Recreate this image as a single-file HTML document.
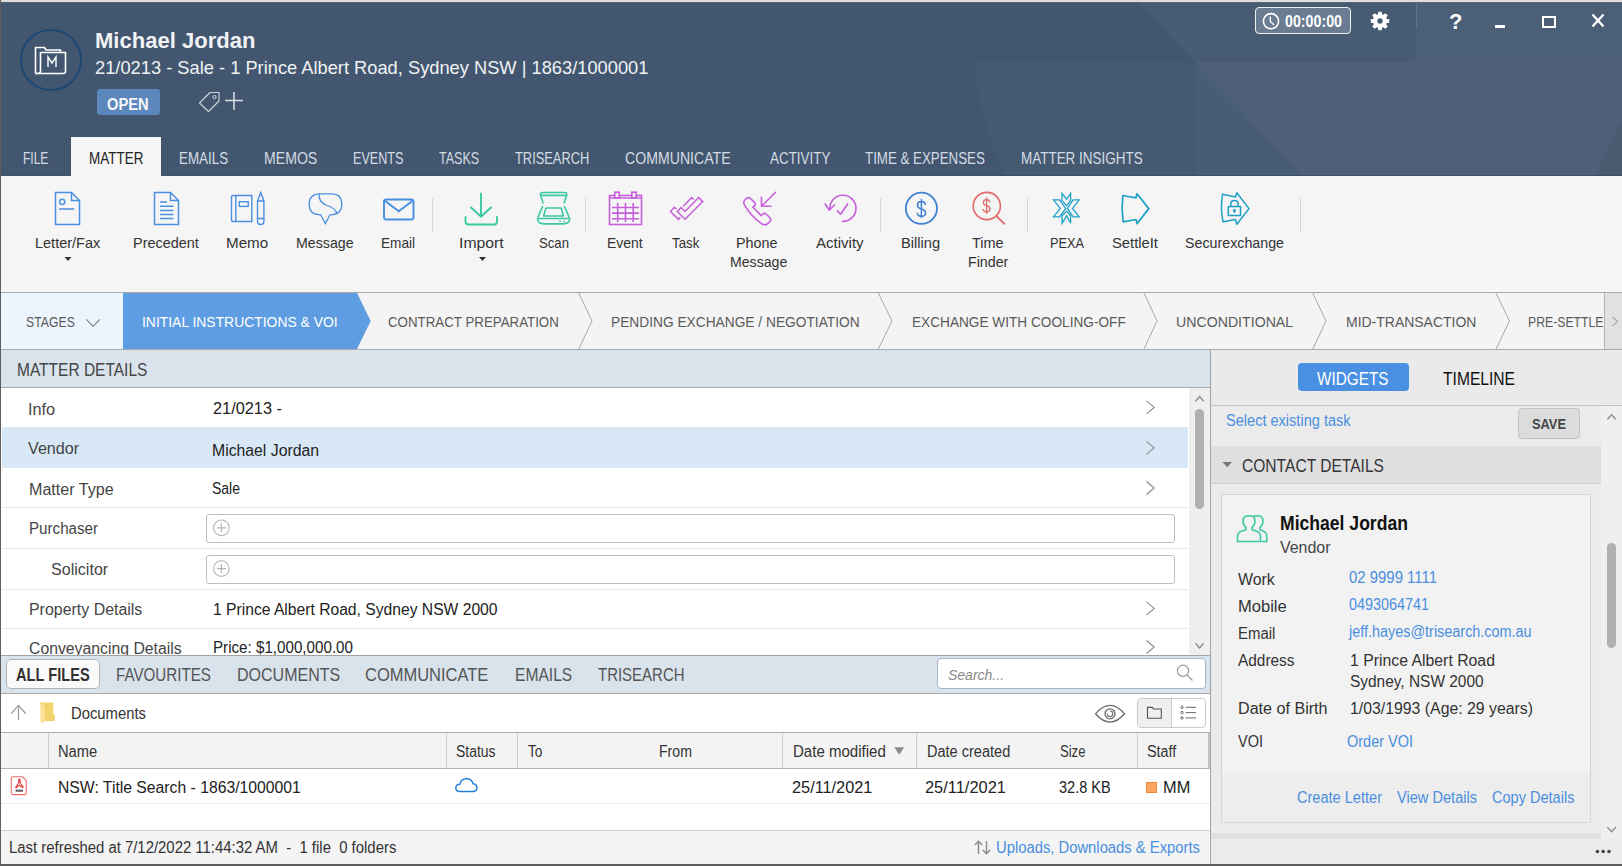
<!DOCTYPE html>
<html><head><meta charset="utf-8"><title>Matter</title>
<style>
html,body{margin:0;padding:0;}
body{width:1622px;height:866px;position:relative;overflow:hidden;background:#f5f5f5;font-family:"Liberation Sans",sans-serif;}
.a{position:absolute;display:block;}
.t{position:absolute;white-space:nowrap;font-family:"Liberation Sans",sans-serif;}
</style></head><body>
<div class="a" style="left:0px;top:0px;width:1622px;height:2px;background:#dedede;"></div>
<div class="a" style="left:0px;top:2px;width:1622px;height:1px;background:#58626e;"></div>
<div class="a" style="left:0px;top:0px;width:1px;height:866px;background:#5e5e5e;"></div>
<div class="a" style="left:1px;top:3px;width:1621px;height:173px;background:#42576f;"></div>
<svg class="a" style="left:0px;top:0px;" width="1622" height="176" viewBox="0 0 1622 176"><path d="M976,62 C976,100 990,140 1004,176 L1195,176 L1195,62 Z" fill="#fff" fill-opacity="0.02"/><path d="M1136,2 L1195,62 L1415,62 L1415,2 Z" fill="#fff" fill-opacity="0.03"/><path d="M1415,2 L1622,2 L1622,62 L1415,62 Z" fill="#fff" fill-opacity="0.05"/><path d="M1195,62 L1303,176 L1195,176 Z" fill="#fff" fill-opacity="0.035"/><path d="M1195,62 L1622,62 L1622,176 L1303,176 Z" fill="#fff" fill-opacity="0.06"/><path d="M1622,122 Q1606,148 1596,176 L1622,176 Z" fill="#000" fill-opacity="0.05"/></svg>
<div class="a" style="left:1px;top:175px;width:1621px;height:1px;background:#3c5068;"></div>
<svg class="a" style="left:19px;top:29px;" width="64" height="64" viewBox="0 0 64 64"><circle cx="32" cy="31" r="30" fill="none" stroke="#1b4775" stroke-width="2"/><path d="M16.5,44.5 V18.5 H25.5 L27,21 H41.5 V23.5" fill="none" stroke="#fff" stroke-width="1.6" stroke-linejoin="round"/><path d="M16.5,44.5 C16.5,44.5 19,45 21.5,43 V23.5 H46.5 V42 C46.5,43.5 45.5,44.5 44,44.5 H16.5" fill="none" stroke="#fff" stroke-width="1.6" stroke-linejoin="round"/><path d="M29,38 V28 L33,34 L37,28 V38" fill="none" stroke="#fff" stroke-width="1.4" stroke-linejoin="miter"/></svg>
<div class="t" style="left:95.00px;top:29.95px;font-size:22.50px;line-height:22.50px;color:#f1f2f4;font-weight:700;transform:scaleX(0.9799);transform-origin:0 0;">Michael Jordan</div>
<div class="t" style="left:94.70px;top:58.74px;font-size:18.50px;line-height:18.50px;color:#f0f2f4;transform:scaleX(0.9880);transform-origin:0 0;">21/0213 - Sale - 1 Prince Albert Road, Sydney NSW | 1863/1000001</div>
<div class="a" style="left:97px;top:89px;width:63px;height:26px;background:#5b87bd;border-radius:3px;"></div>
<div class="t" style="left:107.20px;top:96.75px;font-size:16.00px;line-height:16.00px;color:#f4f6f8;font-weight:700;transform:scaleX(0.9183);transform-origin:0 0;">OPEN</div>
<svg class="a" style="left:196px;top:89px;" width="50" height="26" viewBox="0 0 50 26"><path d="M3.5,14 L14,3.5 L23,3.5 L23,12 L12.5,22.5 Z" fill="none" stroke="#cfd6de" stroke-width="1.1" stroke-linejoin="round"/><circle cx="18.5" cy="8" r="1.6" fill="none" stroke="#cfd6de" stroke-width="1"/><path d="M38,3 V21 M29,11.5 H47" stroke="#d6dce3" stroke-width="1.6"/></svg>
<div class="a" style="left:1255px;top:7px;width:96px;height:27px;background:#6a7c92;border:1px solid #eef1f4;border-radius:4px;box-sizing:border-box;"></div>
<svg class="a" style="left:1261px;top:12px;" width="20" height="19" viewBox="0 0 20 19"><circle cx="10" cy="9.2" r="7.6" fill="none" stroke="#fff" stroke-width="1.6"/><path d="M9.3,4.5 V9.5 L13,13" fill="none" stroke="#fff" stroke-width="1.3"/></svg>
<div class="t" style="left:1285.00px;top:13.03px;font-size:16.50px;line-height:16.50px;color:#ffffff;font-weight:700;transform:scaleX(0.8623);transform-origin:0 0;">00:00:00</div>
<svg class="a" style="left:1370px;top:11px;" width="20" height="20" viewBox="0 0 20 20"><polygon points="19.26,8.37 19.26,11.63 16.69,12.05 16.18,13.29 17.70,15.39 15.39,17.70 13.29,16.18 12.05,16.69 11.63,19.26 8.37,19.26 7.95,16.69 6.71,16.18 4.61,17.70 2.30,15.39 3.82,13.29 3.31,12.05 0.74,11.63 0.74,8.37 3.31,7.95 3.82,6.71 2.30,4.61 4.61,2.30 6.71,3.82 7.95,3.31 8.37,0.74 11.63,0.74 12.05,3.31 13.29,3.82 15.39,2.30 17.70,4.61 16.18,6.71 16.69,7.95" fill="#fff"/><circle cx="10" cy="10" r="2.7" fill="#485c74"/></svg>
<div class="a" style="left:1416px;top:3px;width:1px;height:26px;background:#60728a;"></div>
<div class="t" style="left:1449.00px;top:10.87px;font-size:22.00px;line-height:22.00px;color:#ffffff;font-weight:700;">?</div>
<div class="a" style="left:1495px;top:25px;width:10px;height:3px;background:#ffffff;"></div>
<div class="a" style="left:1542px;top:16px;width:14px;height:12px;border:2px solid #fff;box-sizing:border-box;"></div>
<svg class="a" style="left:1590px;top:12px;" width="16" height="17" viewBox="0 0 16 17"><path d="M2.5,2.5 L13.5,14.5 M13.5,2.5 L2.5,14.5" stroke="#fff" stroke-width="2.4" stroke-linecap="butt"/></svg>
<div class="a" style="left:71px;top:137px;width:90px;height:39px;background:#f5f5f5;"></div>
<div class="t" style="left:23.30px;top:149.98px;font-size:16.20px;line-height:16.20px;color:#d5dce4;transform:scaleX(0.7427);transform-origin:0 0;">FILE</div>
<div class="t" style="left:89.30px;top:149.98px;font-size:16.20px;line-height:16.20px;color:#222222;transform:scaleX(0.8318);transform-origin:0 0;">MATTER</div>
<div class="t" style="left:179.20px;top:149.98px;font-size:16.20px;line-height:16.20px;color:#d5dce4;transform:scaleX(0.8283);transform-origin:0 0;">EMAILS</div>
<div class="t" style="left:264.10px;top:149.98px;font-size:16.20px;line-height:16.20px;color:#d5dce4;transform:scaleX(0.8709);transform-origin:0 0;">MEMOS</div>
<div class="t" style="left:353.40px;top:149.98px;font-size:16.20px;line-height:16.20px;color:#d5dce4;transform:scaleX(0.7793);transform-origin:0 0;">EVENTS</div>
<div class="t" style="left:439.40px;top:149.98px;font-size:16.20px;line-height:16.20px;color:#d5dce4;transform:scaleX(0.7746);transform-origin:0 0;">TASKS</div>
<div class="t" style="left:515.30px;top:149.98px;font-size:16.20px;line-height:16.20px;color:#d5dce4;transform:scaleX(0.7938);transform-origin:0 0;">TRISEARCH</div>
<div class="t" style="left:625.00px;top:149.98px;font-size:16.20px;line-height:16.20px;color:#d5dce4;transform:scaleX(0.8721);transform-origin:0 0;">COMMUNICATE</div>
<div class="t" style="left:770.00px;top:149.98px;font-size:16.20px;line-height:16.20px;color:#d5dce4;transform:scaleX(0.8285);transform-origin:0 0;">ACTIVITY</div>
<div class="t" style="left:865.10px;top:149.98px;font-size:16.20px;line-height:16.20px;color:#d5dce4;transform:scaleX(0.8224);transform-origin:0 0;">TIME &amp; EXPENSES</div>
<div class="t" style="left:1020.50px;top:149.98px;font-size:16.20px;line-height:16.20px;color:#d5dce4;transform:scaleX(0.8313);transform-origin:0 0;">MATTER INSIGHTS</div>
<div class="a" style="left:1px;top:176px;width:1621px;height:116px;background:#f5f5f5;"></div>
<div class="a" style="left:1px;top:292px;width:1621px;height:1px;background:#aaaaaa;"></div>
<div class="t" style="left:34.90px;top:235.87px;font-size:14.80px;line-height:14.80px;color:#333333;transform:scaleX(0.9790);transform-origin:0 0;">Letter/Fax</div>
<div class="t" style="left:133.20px;top:235.87px;font-size:14.80px;line-height:14.80px;color:#333333;transform:scaleX(0.9763);transform-origin:0 0;">Precedent</div>
<div class="t" style="left:226.40px;top:235.87px;font-size:14.80px;line-height:14.80px;color:#333333;transform:scaleX(1.0268);transform-origin:0 0;">Memo</div>
<div class="t" style="left:296.30px;top:235.87px;font-size:14.80px;line-height:14.80px;color:#333333;transform:scaleX(0.9601);transform-origin:0 0;">Message</div>
<div class="t" style="left:381.40px;top:235.87px;font-size:14.80px;line-height:14.80px;color:#333333;transform:scaleX(0.9189);transform-origin:0 0;">Email</div>
<div class="t" style="left:459.00px;top:235.87px;font-size:14.80px;line-height:14.80px;color:#333333;transform:scaleX(1.0668);transform-origin:0 0;">Import</div>
<div class="t" style="left:538.50px;top:235.87px;font-size:14.80px;line-height:14.80px;color:#333333;transform:scaleX(0.8902);transform-origin:0 0;">Scan</div>
<div class="t" style="left:607.30px;top:235.87px;font-size:14.80px;line-height:14.80px;color:#333333;transform:scaleX(0.9392);transform-origin:0 0;">Event</div>
<div class="t" style="left:672.40px;top:235.87px;font-size:14.80px;line-height:14.80px;color:#333333;transform:scaleX(0.8984);transform-origin:0 0;">Task</div>
<div class="t" style="left:736.30px;top:235.87px;font-size:14.80px;line-height:14.80px;color:#333333;transform:scaleX(0.9673);transform-origin:0 0;">Phone</div>
<div class="t" style="left:816.20px;top:235.87px;font-size:14.80px;line-height:14.80px;color:#333333;transform:scaleX(1.0149);transform-origin:0 0;">Activity</div>
<div class="t" style="left:901.30px;top:235.87px;font-size:14.80px;line-height:14.80px;color:#333333;transform:scaleX(0.9924);transform-origin:0 0;">Billing</div>
<div class="t" style="left:971.80px;top:235.87px;font-size:14.80px;line-height:14.80px;color:#333333;transform:scaleX(0.9752);transform-origin:0 0;">Time</div>
<div class="t" style="left:1049.50px;top:235.87px;font-size:14.80px;line-height:14.80px;color:#333333;transform:scaleX(0.8608);transform-origin:0 0;">PEXA</div>
<div class="t" style="left:1111.60px;top:235.87px;font-size:14.80px;line-height:14.80px;color:#333333;transform:scaleX(0.9978);transform-origin:0 0;">SettleIt</div>
<div class="t" style="left:1184.90px;top:235.87px;font-size:14.80px;line-height:14.80px;color:#333333;transform:scaleX(0.9631);transform-origin:0 0;">Securexchange</div>
<div class="t" style="left:729.60px;top:254.67px;font-size:14.80px;line-height:14.80px;color:#333333;transform:scaleX(0.9534);transform-origin:0 0;">Message</div>
<div class="t" style="left:968.40px;top:254.67px;font-size:14.80px;line-height:14.80px;color:#333333;transform:scaleX(0.9619);transform-origin:0 0;">Finder</div>
<div class="a" style="left:432px;top:198px;width:1px;height:35px;background:#d9d9d9;"></div>
<div class="a" style="left:585px;top:198px;width:1px;height:35px;background:#d9d9d9;"></div>
<div class="a" style="left:880px;top:198px;width:1px;height:35px;background:#d9d9d9;"></div>
<div class="a" style="left:1027px;top:198px;width:1px;height:35px;background:#d9d9d9;"></div>
<div class="a" style="left:1300px;top:198px;width:1px;height:35px;background:#d9d9d9;"></div>
<svg class="a" style="left:0;top:0" width="1622" height="300" viewBox="0 0 1622 300"><path d="M64.5,257 H71.5 L68,261 Z" fill="#333"/><path d="M479,257 H486 L482.5,261 Z" fill="#333"/><g fill="none" stroke="#4a8fe0" stroke-width="1.5" stroke-linejoin="miter"><path d="M55.5,192.5 H71.5 L79.5,200.5 V224.5 H55.5 Z"/><path d="M71.5,192.5 V200.5 H79.5"/><circle cx="62.2" cy="201.8" r="2.6"/><path d="M59.2,209 H74.3"/></g><g fill="none" stroke="#4a8fe0" stroke-width="1.5"><path d="M154.5,192.5 H170.5 L178.5,200.5 V224.5 H154.5 Z"/><path d="M170.5,192.5 V200.5 H178.5"/><path d="M160,202 H167 M160,206.3 H173.5 M160,210.4 H173.5 M160,214.5 H173.5 M160,218.6 H173.5"/></g><g fill="none" stroke="#4a8fe0" stroke-width="1.4"><path d="M233,195.5 H251.8 V221.5 H233 Q231.5,221.5 231.5,220 V197 Q231.5,195.5 233,195.5 Z"/><path d="M235.8,195.5 V221.5"/><rect x="239.3" y="201.8" width="9" height="4.6"/><path d="M257.5,201 L260.7,192.5 L263.9,201 V221 Q263.9,224.5 260.7,224.5 Q257.5,224.5 257.5,221 Z"/><path d="M257.5,201 H263.9 M257.5,218.5 H263.9"/></g><g fill="none" stroke="#4a8fe0" stroke-width="1.3"><path d="M320.6,214.8 Q309.2,214.8 309.2,204.2 Q309.2,193.8 320,193.8 H331.5 Q341.8,193.8 341.8,204.2 Q341.8,214.8 330,214.8 L325.4,223.6 Z"/><path d="M319.2,194 Q318.2,201.5 326,205 Q335.5,208 337.3,214"/></g><g fill="none" stroke="#4a8fe0" stroke-width="1.9"><rect x="384" y="199.5" width="29.5" height="20" rx="2.2"/><path d="M384.5,200.5 L398.7,211.2 L413,200.5"/></g><g fill="none" stroke="#3cc8a2" stroke-width="1.9" stroke-linecap="round"><path d="M481,193.5 V216.5 M471,207.5 L481,216.8 L491,207.5"/><path d="M465.5,217 V221.5 Q465.5,224.5 468.5,224.5 H494 Q497,224.5 497,221.5 V217"/></g><g fill="none" stroke="#3cc8a2" stroke-width="1.6" stroke-linejoin="round"><path d="M540.5,195.4 V194.6 Q540.5,192.5 543,192.5 H564.5 Q566.8,192.5 566.8,194.6 V195.4 Z"/><path d="M540.9,195.6 L543.2,203.6 M542.8,206 L537.8,217.6 M566.4,195.6 L564,203.6 M564.3,206 L569.3,217.6"/><path d="M537.6,218.5 H569.7 Q569.7,223.9 563,223.9 H544.2 Q537.6,223.9 537.6,218.5 Z"/><path d="M546,208 H561 L563.5,216 H543.6 Z"/></g><circle cx="560" cy="221.3" r="0.9" fill="#3cc8a2"/><circle cx="564" cy="221.3" r="0.9" fill="#3cc8a2"/><g fill="none" stroke="#c75edb" stroke-width="1.6"><rect x="609.5" y="195.5" width="32" height="29"/><rect x="614.8" y="192.2" width="4.4" height="5.6" fill="#f5f5f5"/><rect x="631.8" y="192.2" width="4.4" height="5.6" fill="#f5f5f5"/><path d="M609.5,198 H641.5" /><path d="M612,207.5 H639 M612,213.1 H639 M612,218.7 H639 M617.7,203 V222 M625.5,203 V222 M633.2,203 V222"/></g><g fill="none" stroke="#c75edb" stroke-width="1.5" stroke-linejoin="miter"><path d="M677.3,211.5 L681.2,207.5 L685,211.4 L698.6,197.5 L702.7,201.6 L685,219.2 Z"/><polyline points="676.6,209.3 674.4,207.3 670.5,211.5 678.4,219.4 680.4,217.4"/><polyline points="683.2,206.4 691.5,197.5 693.7,199.4"/></g><g fill="none" stroke="#c75edb" stroke-width="1.6" stroke-linejoin="round" stroke-linecap="round"><path d="M745.6,199.4 L746.4,198.7 Q748.6,196.6 750.8,198.8 L754.6,202.6 Q756.2,204.5 754.5,206 L752.8,207 L761.2,215.6 L762.6,214.2 Q764.5,212.6 766.4,214.3 L769.9,217.8 Q771.6,219.8 769.8,221.6 L767.2,224 Q764.6,225.6 761.6,223.7 Q751.2,216.6 744.3,204.6 Q742.8,201.3 745.6,199.4 Z"/><path d="M775.6,192.3 L761.5,206.3 M761.5,197.3 V206.3 H771"/></g><g fill="none" stroke="#c75edb" stroke-width="1.6" stroke-linecap="round" stroke-linejoin="round"><path d="M829.8,209 A13.1,13.1 0 1 1 842.6,221.4"/><path d="M825.1,204 L829.4,210.2 L834.5,204.8"/><path d="M837.3,210.9 L840.6,214.2 L847.7,203.8"/></g><circle cx="921.4" cy="208.3" r="15.6" fill="none" stroke="#3f7fd3" stroke-width="1.8"/><path d="M921.4,199 V218 M925.4,205 Q925.2,201.6 921.4,201.6 Q917.5,201.6 917.5,205 Q917.5,208.1 921.4,209 Q925.6,209.9 925.6,213 Q925.6,216.3 921.4,216.3 Q917.3,216.3 917.2,212.8" fill="none" stroke="#3f7fd3" stroke-width="1.5"/><circle cx="986.8" cy="206" r="13.6" fill="none" stroke="#df6a6a" stroke-width="1.6"/><path d="M996.3,216 L1004.5,223.8" stroke="#df6a6a" stroke-width="1.8" stroke-linecap="round"/><path d="M986.6,197.3 V213.8 M989.8,202.5 Q989.6,199.7 986.6,199.7 Q983.4,199.7 983.4,202.5 Q983.4,205.1 986.6,205.7 Q990,206.4 990,209 Q990,211.8 986.6,211.8 Q983.3,211.8 983.2,209" fill="none" stroke="#df6a6a" stroke-width="1.3"/><g fill="none" stroke="#1ea1c6" stroke-width="1.3" stroke-linejoin="miter"><path d="M1062,193.5 L1066.7,199.2 L1070.6,193.5 V200.6 L1066.7,205.7 L1062,200.6 Z"/><path d="M1062,223.3 L1066.7,215.8 L1070.6,223.3 V215.8 L1066.7,211.1 L1062,215.8 Z"/><path d="M1053.5,199.9 H1059.6 L1065.7,208.4 L1059.6,216.8 H1053.5 L1060.3,208.4 Z"/><path d="M1079.2,199.9 H1073.1 L1067.4,208.4 L1073.1,216.8 H1079.2 L1072.5,208.4 Z"/></g><path d="M1122.8,195.5 L1136,197.8 L1137,193.8 L1148.8,208.6 L1137,223.6 L1136,219.5 L1123.2,221.8 Q1121.2,208.6 1122.8,195.5 Z" fill="none" stroke="#1ea1c6" stroke-width="1.7" stroke-linejoin="round"/><g fill="none" stroke="#1ea1c6" stroke-width="1.5" stroke-linejoin="round"><path d="M1222.5,194.3 L1235.5,197 L1236.8,192.8 L1249,208.6 L1236.8,224.2 L1235.5,219.6 L1223,221.8 Q1220.2,208 1222.5,194.3 Z"/><rect x="1228.3" y="206.5" width="12.2" height="9"/><path d="M1230.8,206.5 V203.8 Q1230.8,200.5 1234.4,200.5 Q1238,200.5 1238,203.8 V206.5"/></g><circle cx="1234.4" cy="210.4" r="1.5" fill="#1ea1c6"/><path d="M1234.4,210.5 V213" stroke="#1ea1c6" stroke-width="1.2"/></svg>
<div class="a" style="left:1px;top:293px;width:1621px;height:56px;background:#f4f4f4;"></div>
<div class="a" style="left:1px;top:349px;width:1621px;height:1px;background:#a9a9a9;"></div>
<div class="a" style="left:1px;top:293px;width:122px;height:56px;background:#ecf5fe;"></div>
<svg class="a" style="left:0;top:0" width="1622" height="360" viewBox="0 0 1622 360"><polygon points="123,293 357,293 370.7,321 357,349 123,349" fill="#5f9de3"/><polyline points="578.7,293 592,321 578.7,349" fill="none" stroke="#a8a8a8" stroke-width="1"/><polyline points="878.3,293 892,321 878.3,349" fill="none" stroke="#a8a8a8" stroke-width="1"/><polyline points="1144,293 1157,321 1144,349" fill="none" stroke="#a8a8a8" stroke-width="1"/><polyline points="1312.8,293 1326,321 1312.8,349" fill="none" stroke="#a8a8a8" stroke-width="1"/><polyline points="1496,293 1509.5,321 1496,349" fill="none" stroke="#a8a8a8" stroke-width="1"/><polyline points="86.3,319.3 93.1,326.3 99.9,319.3" fill="none" stroke="#777" stroke-width="1.1"/></svg>
<div class="t" style="left:26.40px;top:313.80px;font-size:15.00px;line-height:15.00px;color:#5a5a5a;transform:scaleX(0.8174);transform-origin:0 0;">STAGES</div>
<div class="t" style="left:141.80px;top:313.80px;font-size:15.00px;line-height:15.00px;color:#ffffff;transform:scaleX(0.9266);transform-origin:0 0;">INITIAL INSTRUCTIONS &amp; VOI</div>
<div class="t" style="left:388.30px;top:313.80px;font-size:15.00px;line-height:15.00px;color:#5a5a5a;transform:scaleX(0.8873);transform-origin:0 0;">CONTRACT PREPARATION</div>
<div class="t" style="left:610.70px;top:313.80px;font-size:15.00px;line-height:15.00px;color:#5a5a5a;transform:scaleX(0.9160);transform-origin:0 0;">PENDING EXCHANGE / NEGOTIATION</div>
<div class="t" style="left:911.60px;top:313.80px;font-size:15.00px;line-height:15.00px;color:#5a5a5a;transform:scaleX(0.9094);transform-origin:0 0;">EXCHANGE WITH COOLING-OFF</div>
<div class="t" style="left:1175.60px;top:313.80px;font-size:15.00px;line-height:15.00px;color:#5a5a5a;transform:scaleX(0.9436);transform-origin:0 0;">UNCONDITIONAL</div>
<div class="t" style="left:1346.00px;top:313.80px;font-size:15.00px;line-height:15.00px;color:#5a5a5a;transform:scaleX(0.9314);transform-origin:0 0;">MID-TRANSACTION</div>
<div class="t" style="left:1528.20px;top:313.80px;font-size:15.00px;line-height:15.00px;color:#5a5a5a;transform:scaleX(0.8162);transform-origin:0 0;">PRE-SETTLE</div>
<div class="a" style="left:1604px;top:293px;width:18px;height:56px;background:#e1e1e1;border-left:1px solid #b3b3b3;box-sizing:border-box;"></div>
<svg class="a" style="left:1604px;top:293px;" width="18" height="56" viewBox="0 0 18 56"><polyline points="8.5,24 13.5,28.5 8.5,33" fill="none" stroke="#aaa" stroke-width="1.2"/></svg>
<div class="a" style="left:1px;top:350px;width:1209px;height:37px;background:#d9e3ec;"></div>
<div class="a" style="left:1px;top:387px;width:1209px;height:1px;background:#a9a9a9;"></div>
<div class="t" style="left:16.60px;top:360.59px;font-size:18.20px;line-height:18.20px;color:#454545;transform:scaleX(0.8523);transform-origin:0 0;">MATTER DETAILS</div>
<div class="a" style="left:1px;top:388px;width:1188px;height:267px;background:#ffffff;"></div>
<div class="a" style="left:2px;top:427px;width:1186px;height:41px;background:#d8e8f6;"></div>
<div class="a" style="left:2px;top:507px;width:1186px;height:1px;background:#e8e8e8;"></div>
<div class="a" style="left:2px;top:548px;width:1186px;height:1px;background:#e8e8e8;"></div>
<div class="a" style="left:2px;top:589px;width:1186px;height:1px;background:#e8e8e8;"></div>
<div class="a" style="left:2px;top:628px;width:1186px;height:1px;background:#e8e8e8;"></div>
<div class="t" style="left:28.30px;top:401.85px;font-size:16.00px;line-height:16.00px;color:#454545;transform:scaleX(1.0187);transform-origin:0 0;">Info</div>
<div class="t" style="left:28.30px;top:440.65px;font-size:16.00px;line-height:16.00px;color:#454545;transform:scaleX(1.0099);transform-origin:0 0;">Vendor</div>
<div class="t" style="left:28.60px;top:481.95px;font-size:16.00px;line-height:16.00px;color:#454545;transform:scaleX(1.0059);transform-origin:0 0;">Matter Type</div>
<div class="t" style="left:28.60px;top:520.65px;font-size:16.00px;line-height:16.00px;color:#454545;transform:scaleX(0.9465);transform-origin:0 0;">Purchaser</div>
<div class="t" style="left:50.50px;top:561.65px;font-size:16.00px;line-height:16.00px;color:#454545;transform:scaleX(1.0053);transform-origin:0 0;">Solicitor</div>
<div class="t" style="left:28.60px;top:602.45px;font-size:16.00px;line-height:16.00px;color:#454545;transform:scaleX(0.9956);transform-origin:0 0;">Property Details</div>
<div class="t" style="left:28.60px;top:641.15px;font-size:16.00px;line-height:16.00px;color:#454545;transform:scaleX(0.9864);transform-origin:0 0;">Conveyancing Details</div>
<div class="t" style="left:212.50px;top:400.95px;font-size:16.00px;line-height:16.00px;color:#222222;transform:scaleX(1.0192);transform-origin:0 0;">21/0213 -</div>
<div class="t" style="left:212.30px;top:442.95px;font-size:16.00px;line-height:16.00px;color:#222222;transform:scaleX(0.9862);transform-origin:0 0;">Michael Jordan</div>
<div class="t" style="left:212.40px;top:481.25px;font-size:16.00px;line-height:16.00px;color:#222222;transform:scaleX(0.8750);transform-origin:0 0;">Sale</div>
<div class="t" style="left:212.80px;top:601.75px;font-size:16.00px;line-height:16.00px;color:#222222;transform:scaleX(0.9783);transform-origin:0 0;">1 Prince Albert Road, Sydney NSW 2000</div>
<div class="t" style="left:212.50px;top:640.45px;font-size:16.00px;line-height:16.00px;color:#222222;transform:scaleX(0.9479);transform-origin:0 0;">Price: $1,000,000.00</div>
<div class="a" style="left:206px;top:513.5px;width:969px;height:29.5px;background:#ffffff;border:1px solid #bdbdbd;border-radius:3px;box-sizing:border-box;"></div>
<div class="a" style="left:206px;top:554.5px;width:969px;height:29.5px;background:#ffffff;border:1px solid #bdbdbd;border-radius:3px;box-sizing:border-box;"></div>
<div class="a" style="left:1189px;top:388px;width:21px;height:267px;background:#efefef;"></div>
<div class="a" style="left:1195px;top:409px;width:9px;height:100px;background:#b0b0b0;border-radius:4.5px;"></div>
<div class="a" style="left:1px;top:655px;width:1209px;height:1px;background:#a3a3a3;"></div>
<div class="a" style="left:1px;top:656px;width:1209px;height:37px;background:#d9e3ec;"></div>
<div class="a" style="left:1px;top:693px;width:1209px;height:1px;background:#a9a9a9;"></div>
<div class="a" style="left:5.5px;top:658.5px;width:94.5px;height:30px;background:#fafafa;border:1px solid #b3b3b3;border-radius:5px;box-sizing:border-box;"></div>
<div class="t" style="left:15.50px;top:666.58px;font-size:17.50px;line-height:17.50px;color:#333333;font-weight:700;transform:scaleX(0.8354);transform-origin:0 0;">ALL FILES</div>
<div class="t" style="left:115.50px;top:666.16px;font-size:18.00px;line-height:18.00px;color:#555555;transform:scaleX(0.8421);transform-origin:0 0;">FAVOURITES</div>
<div class="t" style="left:236.70px;top:666.16px;font-size:18.00px;line-height:18.00px;color:#555555;transform:scaleX(0.8897);transform-origin:0 0;">DOCUMENTS</div>
<div class="t" style="left:365.20px;top:666.16px;font-size:18.00px;line-height:18.00px;color:#555555;transform:scaleX(0.9161);transform-origin:0 0;">COMMUNICATE</div>
<div class="t" style="left:514.50px;top:666.16px;font-size:18.00px;line-height:18.00px;color:#555555;transform:scaleX(0.8667);transform-origin:0 0;">EMAILS</div>
<div class="t" style="left:597.60px;top:666.16px;font-size:18.00px;line-height:18.00px;color:#555555;transform:scaleX(0.8317);transform-origin:0 0;">TRISEARCH</div>
<div class="a" style="left:937px;top:658px;width:268.5px;height:31px;background:#ffffff;border:1px solid #a6b6c8;border-radius:4px;box-sizing:border-box;"></div>
<div class="t" style="left:947.50px;top:666.88px;font-size:15.50px;line-height:15.50px;color:#8a8a8a;font-style:italic;transform:scaleX(0.9032);transform-origin:0 0;">Search...</div>
<div class="a" style="left:1px;top:694px;width:1209px;height:38px;background:#ffffff;"></div>
<div class="a" style="left:1px;top:732px;width:1209px;height:1px;background:#adadad;"></div>
<div class="t" style="left:71.20px;top:706.05px;font-size:16.00px;line-height:16.00px;color:#333333;transform:scaleX(0.9258);transform-origin:0 0;">Documents</div>
<div class="a" style="left:1137px;top:698px;width:69px;height:30px;background:#ffffff;border:1px solid #cacaca;border-radius:4px;box-sizing:border-box;"></div>
<div class="a" style="left:1138px;top:699px;width:33px;height:28px;background:#efefef;border-radius:3px 0 0 3px;"></div>
<div class="a" style="left:1171px;top:699px;width:1px;height:28.5px;background:#cacaca;"></div>
<div class="a" style="left:1px;top:733px;width:1209px;height:35px;background:#f4f4f4;"></div>
<div class="a" style="left:1px;top:768px;width:1209px;height:1px;background:#b3b3b3;"></div>
<div class="a" style="left:48px;top:733px;width:1px;height:35px;background:#cdcdcd;"></div>
<div class="a" style="left:446px;top:733px;width:1px;height:35px;background:#cdcdcd;"></div>
<div class="a" style="left:517px;top:733px;width:1px;height:35px;background:#cdcdcd;"></div>
<div class="a" style="left:782px;top:733px;width:1px;height:35px;background:#cdcdcd;"></div>
<div class="a" style="left:916px;top:733px;width:1px;height:35px;background:#cdcdcd;"></div>
<div class="a" style="left:1137px;top:733px;width:1px;height:35px;background:#cdcdcd;"></div>
<div class="a" style="left:1208px;top:733px;width:2px;height:35px;background:#c4c4c4;"></div>
<div class="t" style="left:58.30px;top:743.65px;font-size:16.00px;line-height:16.00px;color:#333333;transform:scaleX(0.9180);transform-origin:0 0;">Name</div>
<div class="t" style="left:456.20px;top:743.65px;font-size:16.00px;line-height:16.00px;color:#333333;transform:scaleX(0.8700);transform-origin:0 0;">Status</div>
<div class="t" style="left:527.50px;top:743.65px;font-size:16.00px;line-height:16.00px;color:#333333;transform:scaleX(0.8521);transform-origin:0 0;">To</div>
<div class="t" style="left:659.40px;top:743.65px;font-size:16.00px;line-height:16.00px;color:#333333;transform:scaleX(0.8820);transform-origin:0 0;">From</div>
<div class="t" style="left:792.60px;top:743.65px;font-size:16.00px;line-height:16.00px;color:#333333;transform:scaleX(0.9402);transform-origin:0 0;">Date modified</div>
<div class="t" style="left:926.50px;top:743.65px;font-size:16.00px;line-height:16.00px;color:#333333;transform:scaleX(0.9083);transform-origin:0 0;">Date created</div>
<div class="t" style="left:1059.50px;top:743.65px;font-size:16.00px;line-height:16.00px;color:#333333;transform:scaleX(0.8167);transform-origin:0 0;">Size</div>
<div class="t" style="left:1147.30px;top:743.65px;font-size:16.00px;line-height:16.00px;color:#333333;transform:scaleX(0.8960);transform-origin:0 0;">Staff</div>
<div class="a" style="left:1px;top:769px;width:1209px;height:61px;background:#ffffff;"></div>
<div class="a" style="left:1px;top:803px;width:1209px;height:1px;background:#ececec;"></div>
<div class="t" style="left:57.80px;top:779.85px;font-size:16.00px;line-height:16.00px;color:#222222;transform:scaleX(0.9830);transform-origin:0 0;">NSW: Title Search - 1863/1000001</div>
<div class="t" style="left:791.70px;top:779.85px;font-size:16.00px;line-height:16.00px;color:#222222;transform:scaleX(1.0190);transform-origin:0 0;">25/11/2021</div>
<div class="t" style="left:925.40px;top:779.85px;font-size:16.00px;line-height:16.00px;color:#222222;transform:scaleX(1.0253);transform-origin:0 0;">25/11/2021</div>
<div class="t" style="left:1058.60px;top:779.85px;font-size:16.00px;line-height:16.00px;color:#222222;transform:scaleX(0.9086);transform-origin:0 0;">32.8 KB</div>
<div class="t" style="left:1162.90px;top:779.85px;font-size:16.00px;line-height:16.00px;color:#222222;transform:scaleX(1.0225);transform-origin:0 0;">MM</div>
<div class="a" style="left:1146px;top:782px;width:11px;height:11px;background:#f8a660;border:1px solid #ee8a3a;box-sizing:border-box;"></div>
<div class="a" style="left:1px;top:830px;width:1209px;height:1px;background:#cfcfcf;"></div>
<div class="a" style="left:1px;top:831px;width:1209px;height:33px;background:#f4f4f4;"></div>
<div class="t" style="left:9.00px;top:840.05px;font-size:16.00px;line-height:16.00px;color:#333333;transform:scaleX(0.9312);transform-origin:0 0;white-space:pre;">Last refreshed at 7/12/2022 11:44:32 AM  -  1 file  0 folders</div>
<div class="t" style="left:996.30px;top:839.85px;font-size:16.00px;line-height:16.00px;color:#4a8fe0;transform:scaleX(0.9248);transform-origin:0 0;">Uploads, Downloads &amp; Exports</div>
<div class="a" style="left:1210px;top:350px;width:1px;height:514px;background:#a3a3a3;"></div>
<div class="a" style="left:1211px;top:350px;width:411px;height:514px;background:#eaeaea;"></div>
<div class="a" style="left:1298px;top:363px;width:111px;height:28px;background:#4a90e2;border-radius:4px;"></div>
<div class="t" style="left:1317.30px;top:369.64px;font-size:18.50px;line-height:18.50px;color:#ffffff;transform:scaleX(0.8285);transform-origin:0 0;">WIDGETS</div>
<div class="t" style="left:1442.80px;top:369.64px;font-size:18.50px;line-height:18.50px;color:#111111;transform:scaleX(0.8441);transform-origin:0 0;">TIMELINE</div>
<div class="a" style="left:1211px;top:405px;width:411px;height:1px;background:#c6c6c6;"></div>
<div class="a" style="left:1211px;top:406px;width:390px;height:433px;background:#ebebeb;"></div>
<div class="t" style="left:1226.10px;top:412.95px;font-size:16.00px;line-height:16.00px;color:#4a8fe0;transform:scaleX(0.9096);transform-origin:0 0;">Select existing task</div>
<div class="a" style="left:1518px;top:407.5px;width:62px;height:31px;background:#dcdcdc;border:1px solid #c3c3c3;border-radius:4px;box-sizing:border-box;"></div>
<div class="t" style="left:1531.50px;top:416.48px;font-size:15.50px;line-height:15.50px;color:#454545;font-weight:700;transform:scaleX(0.8273);transform-origin:0 0;">SAVE</div>
<div class="a" style="left:1211px;top:446px;width:390px;height:37px;background:#dfdfdf;"></div>
<div class="a" style="left:1211px;top:483px;width:390px;height:1px;background:#d0d0d0;"></div>
<div class="t" style="left:1242.30px;top:457.04px;font-size:18.50px;line-height:18.50px;color:#353535;transform:scaleX(0.8422);transform-origin:0 0;">CONTACT DETAILS</div>
<div class="a" style="left:1221px;top:494px;width:370px;height:329px;background:#f2f2f2;border:1px solid #d6d6d6;box-sizing:border-box;"></div>
<div class="a" style="left:1222px;top:772px;width:368px;height:50px;background:#ededed;"></div>
<div class="t" style="left:1279.60px;top:514.39px;font-size:19.50px;line-height:19.50px;color:#111111;font-weight:700;transform:scaleX(0.9014);transform-origin:0 0;">Michael Jordan</div>
<div class="t" style="left:1279.60px;top:540.35px;font-size:16.00px;line-height:16.00px;color:#454545;transform:scaleX(0.9961);transform-origin:0 0;">Vendor</div>
<div class="t" style="left:1237.50px;top:571.95px;font-size:16.00px;line-height:16.00px;color:#333333;transform:scaleX(0.9919);transform-origin:0 0;">Work</div>
<div class="t" style="left:1349.10px;top:569.95px;font-size:16.00px;line-height:16.00px;color:#4a8fe0;transform:scaleX(0.9332);transform-origin:0 0;">02 9999 1111</div>
<div class="t" style="left:1237.50px;top:599.15px;font-size:16.00px;line-height:16.00px;color:#333333;transform:scaleX(1.0340);transform-origin:0 0;">Mobile</div>
<div class="t" style="left:1349.10px;top:596.85px;font-size:16.00px;line-height:16.00px;color:#4a8fe0;transform:scaleX(0.8989);transform-origin:0 0;">0493064741</div>
<div class="t" style="left:1237.50px;top:626.05px;font-size:16.00px;line-height:16.00px;color:#333333;transform:scaleX(0.9325);transform-origin:0 0;">Email</div>
<div class="t" style="left:1349.36px;top:623.65px;font-size:16.00px;line-height:16.00px;color:#4a8fe0;transform:scaleX(0.9010);transform-origin:0 0;">jeff.hayes@trisearch.com.au</div>
<div class="t" style="left:1237.50px;top:653.05px;font-size:16.00px;line-height:16.00px;color:#333333;transform:scaleX(0.9625);transform-origin:0 0;">Address</div>
<div class="t" style="left:1349.60px;top:652.55px;font-size:16.00px;line-height:16.00px;color:#333333;transform:scaleX(0.9877);transform-origin:0 0;">1 Prince Albert Road</div>
<div class="t" style="left:1349.60px;top:673.75px;font-size:16.00px;line-height:16.00px;color:#333333;transform:scaleX(0.9653);transform-origin:0 0;">Sydney, NSW 2000</div>
<div class="t" style="left:1237.50px;top:701.05px;font-size:16.00px;line-height:16.00px;color:#333333;transform:scaleX(1.0067);transform-origin:0 0;">Date of Birth</div>
<div class="t" style="left:1349.60px;top:700.95px;font-size:16.00px;line-height:16.00px;color:#333333;transform:scaleX(0.9892);transform-origin:0 0;">1/03/1993 (Age: 29 years)</div>
<div class="t" style="left:1237.50px;top:734.25px;font-size:16.00px;line-height:16.00px;color:#333333;transform:scaleX(0.9058);transform-origin:0 0;">VOI</div>
<div class="t" style="left:1347.20px;top:733.75px;font-size:16.00px;line-height:16.00px;color:#4a8fe0;transform:scaleX(0.9053);transform-origin:0 0;">Order VOI</div>
<div class="t" style="left:1296.90px;top:790.25px;font-size:16.00px;line-height:16.00px;color:#4a8fe0;transform:scaleX(0.9101);transform-origin:0 0;">Create Letter</div>
<div class="t" style="left:1397.30px;top:790.25px;font-size:16.00px;line-height:16.00px;color:#4a8fe0;transform:scaleX(0.9122);transform-origin:0 0;">View Details</div>
<div class="t" style="left:1492.20px;top:790.25px;font-size:16.00px;line-height:16.00px;color:#4a8fe0;transform:scaleX(0.9085);transform-origin:0 0;">Copy Details</div>
<div class="a" style="left:1601px;top:406px;width:21px;height:433px;background:#efefef;"></div>
<div class="a" style="left:1607px;top:543px;width:9px;height:105px;background:#b0b0b0;border-radius:4.5px;"></div>
<div class="a" style="left:1211px;top:833px;width:390px;height:5.5px;background:#e0e0e0;"></div>
<div class="a" style="left:1211px;top:839px;width:411px;height:25px;background:#ebebeb;"></div>
<div class="a" style="left:0px;top:864px;width:1622px;height:2px;background:#5c5c5c;"></div>
<svg class="a" style="left:0;top:0" width="1622" height="866" viewBox="0 0 1622 866"><circle cx="221.4" cy="527.8" r="7.8" fill="none" stroke="#b4b4b4" stroke-width="1.1"/><path d="M221.4,523.3 V532.3 M216.9,527.8 H225.9" stroke="#b4b4b4" stroke-width="1.2"/><circle cx="221.4" cy="568.6" r="7.8" fill="none" stroke="#b4b4b4" stroke-width="1.1"/><path d="M221.4,564.1 V573.1 M216.9,568.6 H225.9" stroke="#b4b4b4" stroke-width="1.2"/><polyline points="1146.5,400.9 1154.2,407.4 1146.5,413.9" fill="none" stroke="#8a8a8a" stroke-width="1.1"/><polyline points="1146.5,441.3 1154.2,447.8 1146.5,454.3" fill="none" stroke="#8a8a8a" stroke-width="1.1"/><polyline points="1146.5,481.5 1154.2,488 1146.5,494.5" fill="none" stroke="#8a8a8a" stroke-width="1.1"/><polyline points="1146.5,601.9 1154.2,608.4 1146.5,614.9" fill="none" stroke="#8a8a8a" stroke-width="1.1"/><polyline points="1146.5,640.5 1154.2,647 1146.5,653.5" fill="none" stroke="#8a8a8a" stroke-width="1.1"/><polyline points="1195.5,401.2 1199.6,396.5 1203.7,401.2" fill="none" stroke="#8a8a8a" stroke-width="1.3"/><polyline points="1195.5,643.3 1199.6,648 1203.7,643.3" fill="none" stroke="#8a8a8a" stroke-width="1.3"/><circle cx="1183" cy="670.8" r="5.6" fill="none" stroke="#9a9a9a" stroke-width="1.2"/><path d="M1187,675 L1192.5,680.5" stroke="#9a9a9a" stroke-width="1.2"/><path d="M18.5,705.3 V720 M11.3,713.5 L18.5,705.3 L25.7,713.5" fill="none" stroke="#9a9a9a" stroke-width="1.2"/><path d="M40.3,702.6 H53.3 V714.3 H54.8 V721 H44.6 Z" fill="#f2d36e"/><path d="M40.3,703.2 L44.6,705.9 V721.3 L43,723.6 L40.3,721.5 Z" fill="#fce39a"/><path d="M1095.5,713.8 Q1110,697 1124.5,713.8 Q1110,730.5 1095.5,713.8 Z" fill="none" stroke="#6a6a6a" stroke-width="1.3"/><circle cx="1110" cy="713.8" r="5" fill="none" stroke="#6a6a6a" stroke-width="1.3"/><path d="M1110,711 A2.8,2.8 0 1 1 1107.2,713.8" fill="none" stroke="#6a6a6a" stroke-width="1.1"/><path d="M1147.5,718.3 V707.4 H1152.3 L1153.6,709 H1161.3 V718.3 Z" fill="none" stroke="#555" stroke-width="1.1"/><g fill="none" stroke="#6a6a6a" stroke-width="1"><circle cx="1182" cy="707.3" r="1.2"/><circle cx="1182" cy="712.6" r="1.2"/><circle cx="1182" cy="717.9" r="1.2"/><path d="M1185.5,707.3 H1196 M1185.5,712.6 H1196 M1185.5,717.9 H1196"/></g><path d="M894.3,747.3 H904.1 L899.2,754.8 Z" fill="#8a8a8a"/><path d="M11.3,778.5 Q11.3,776.8 13,776.8 H22.5 L26.3,780.6 V793 Q26.3,794.6 24.7,794.6 H13 Q11.3,794.6 11.3,793 Z" fill="#fff" stroke="#f06a6a" stroke-width="1.1"/><path d="M19.3,779 Q18.2,779.5 19,782.5 L16,786.8 Q15.2,788 16.3,787.8 L19.3,785.2 L22.3,787.3 Q23.4,787.8 22.8,786.5 L19.9,782.5 Q20.6,779.5 19.3,779 Z" fill="none" stroke="#e52e2e" stroke-width="1.1"/><rect x="15.6" y="789.6" width="7.4" height="2.2" fill="#666"/><path d="M460,791.5 Q455.8,791.5 455.8,788 Q455.8,784.5 459.8,784.3 Q461,778.8 466.5,778.8 Q471.8,778.8 473,783.8 Q477,784.2 477,787.8 Q477,791.5 472.8,791.5 Z" fill="none" stroke="#1f7fd6" stroke-width="1.4"/><path d="M978.5,854 V841.5 M974.8,845 L978.5,841.3 L982.2,845 M986.5,841 V853.5 M982.8,850 L986.5,853.7 L990.2,850" fill="none" stroke="#8a8a8a" stroke-width="1.4"/><path d="M1222.5,462 H1232 L1227.2,467.3 Z" fill="#777"/><g fill="none" stroke="#3cc8a2" stroke-width="1.6" stroke-linejoin="round"><path d="M1237.5,541.5 V536.5 Q1237.5,532.5 1242,531 L1246,529.8 V527.5 Q1243,525 1243,520.5 Q1243,515.8 1249,515.8 Q1255,515.8 1255,520.5 Q1255,525 1252,527.5 V529.8 L1256,531 Q1260.5,532.5 1260.5,536.5 V541.5 Z"/><path d="M1253.5,516.5 Q1255,515.8 1257,515.8 Q1263,515.8 1263,520.5 Q1263,525 1260,527.5 V529.8 L1263,531 Q1266.8,532.5 1266.8,536.5 V541.5 H1261.5"/></g><polyline points="1607.5,419.3 1611.6,414.8 1615.7,419.3" fill="none" stroke="#8a8a8a" stroke-width="1.3"/><polyline points="1607.3,827 1611.6,831.7 1615.9,827" fill="none" stroke="#8a8a8a" stroke-width="1.3"/><circle cx="1597.4" cy="851.5" r="1.8" fill="#444"/><circle cx="1603.2" cy="851.5" r="1.8" fill="#444"/><circle cx="1609" cy="851.5" r="1.8" fill="#444"/></svg>
</body></html>
